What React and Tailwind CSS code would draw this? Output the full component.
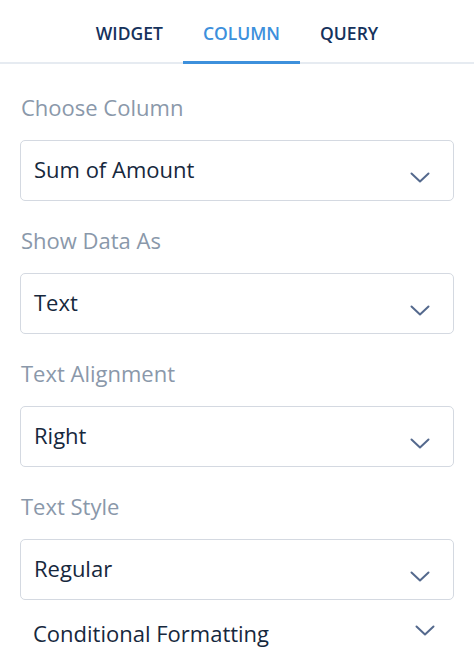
import { useState } from 'react'

const tabs = ['WIDGET', 'COLUMN', 'QUERY']

const fields = [
  { label: 'Choose Column', value: 'Sum of Amount' },
  { label: 'Show Data As', value: 'Text' },
  { label: 'Text Alignment', value: 'Right' },
  { label: 'Text Style', value: 'Regular' },
]

function Chevron({ className = '' }) {
  return (
    <svg
      width="20"
      height="11"
      viewBox="0 0 20 11"
      fill="none"
      className={className}
    >
      <path
        d="M1.5 1.5L10 9.5L18.5 1.5"
        stroke="#54698d"
        strokeWidth="2"
        strokeLinecap="round"
        strokeLinejoin="round"
      />
    </svg>
  )
}

export default function App() {
  const [active, setActive] = useState('COLUMN')

  return (
    <div
      className="w-[474px] h-[663px] bg-white overflow-hidden"
      style={{ fontFamily: '"Open Sans", "Noto Sans", sans-serif' }}
    >
      <div className="relative flex justify-center h-[64px] border-b-2 border-[#e6ebf1]">
        {tabs.map((t) => (
          <button
            key={t}
            onClick={() => setActive(t)}
            className={`relative px-[20px] h-full flex items-center justify-center text-[17.5px] font-semibold pt-[5px] ${
              active === t ? 'text-[#3d90dc]' : 'text-[#16325c]'
            }`}
          >
            {t}
            {active === t && (
              <span className="absolute left-0 right-0 -bottom-[2px] h-[3px] bg-[#3d90dc]" />
            )}
          </button>
        ))}
      </div>

      <div className="px-[20px] pt-[29px]">
        {fields.map((f) => (
          <div key={f.label} className="mb-[25px]">
            <div className="pl-[1px] text-[22px] leading-[28px] text-[#8a98aa] mb-[19px]">
              {f.label}
            </div>
            <div className="h-[61px] border border-[#d4d9e1] rounded-[5px] flex items-center justify-between pl-[13px] pr-[23px]">
              <span className="text-[22px] text-[#16283d] -mt-[3px]">{f.value}</span>
              <Chevron className="mt-[13px]" />
            </div>
          </div>
        ))}
        <div className="-mt-[10px] flex items-center justify-between pl-[13px] pr-[19px] h-[36px]">
          <span className="text-[22px] text-[#16283d]">Conditional Formatting</span>
          <Chevron className="-mt-[5px]" />
        </div>
      </div>
    </div>
  )
}
